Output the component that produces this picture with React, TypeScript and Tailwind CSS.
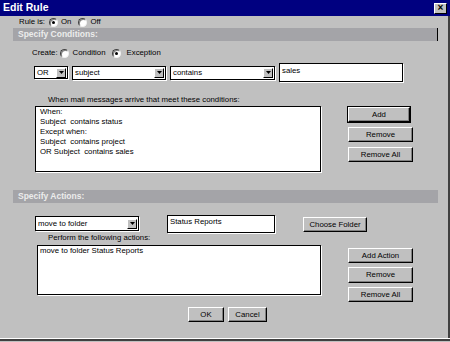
import React from "react";

function Radio({ on }: { on?: boolean }) {
  return (
    <span className="inline-flex h-[9px] w-[9px] shrink-0 items-center justify-center rounded-full border border-t-[#404040] border-l-[#404040] border-r-[#f0f0f0] border-b-[#f0f0f0] bg-white shadow-[inset_1px_1px_0_#808080]">
      {on && <span className="h-[3px] w-[3px] rounded-full bg-black" />}
    </span>
  );
}

function Arrow() {
  return (
    <span className="flex h-[10px] w-[10px] shrink-0 items-center justify-center border border-t-white border-l-white border-r-black border-b-black bg-[#c0c0c0]">
      <svg width="5" height="3" viewBox="0 0 5 3">
        <path d="M0 0h5L2.5 3z" fill="#000" />
      </svg>
    </span>
  );
}

function Combo({ text, className }: { text: string; className: string }) {
  return (
    <div className={`flex items-center justify-between border border-black bg-white pl-[2px] pr-px shadow-[1px_1px_0_#fff] ${className}`}>
      <span className="leading-none">{text}</span>
      <Arrow />
    </div>
  );
}

function Btn({ label, className, isDefault }: { label: string; className: string; isDefault?: boolean }) {
  const inner = (
    <div className="flex h-full w-full items-center justify-center border border-t-white border-l-white border-r-black border-b-black bg-[#c0c0c0] shadow-[inset_-1px_-1px_0_#808080]">
      {label}
    </div>
  );
  if (isDefault) {
    return <div className={`border border-black ${className}`}>{inner}</div>;
  }
  return <div className={className}>{inner}</div>;
}

function Bar({ title, edge }: { title: string; edge?: boolean }) {
  return (
    <div className={`ml-[13px] flex h-[13px] w-[425px] items-center bg-[#a4a4a8] pl-[5px] ${edge ? "border-r border-r-black" : ""}`}>
      <span className="text-[8.5px] font-bold text-[#ececec]">{title}</span>
    </div>
  );
}

export default function App() {
  return (
    <div className="h-[342px] w-[450px] overflow-hidden bg-[#c0c0c0] text-[7.8px] text-black [font-family:'Liberation_Sans',Arial,sans-serif]">
      <div className="flex h-[16px] items-center justify-between bg-[#000080] px-[3px]">
        <span className="text-[10.5px] font-bold text-white">Edit Rule</span>
        <span className="flex h-[11px] w-[13px] items-center justify-center border border-t-white border-l-white border-r-black border-b-black bg-[#c0c0c0] text-[10px] font-bold leading-none">
          ×
        </span>
      </div>

      <div className="flex h-[322px] flex-col border-r-2 border-r-[#404040]">
        <div className="flex h-[12px] items-center pl-[19px]">
          <span>Rule is:</span>
          <span className="ml-[4px] flex"><Radio on /></span>
          <span className="ml-[3px]">On</span>
          <span className="ml-[7px] flex"><Radio /></span>
          <span className="ml-[3px]">Off</span>
        </div>

        <Bar title="Specify Conditions:" edge />

        <div className="mt-[6px] flex h-[12px] items-center pl-[32px]">
          <span>Create:</span>
          <span className="ml-[2px] flex"><Radio /></span>
          <span className="ml-[4px]">Condition</span>
          <span className="ml-[6px] flex"><Radio on /></span>
          <span className="ml-[6px]">Exception</span>
        </div>

        <div className="mt-[4px] flex h-[19px] items-center pl-[34px]">
          <Combo text="OR" className="h-[13px] w-[34px]" />
          <Combo text="subject" className="ml-[4px] h-[14px] w-[94px]" />
          <Combo text="contains" className="ml-[4px] h-[14px] w-[105px]" />
          <div className="ml-[4px] flex h-[19px] w-[124px] items-start border border-black bg-white pl-[2px] pt-[3px] leading-none shadow-[1px_1px_0_#fff]">
            sales
          </div>
        </div>

        <div className="mt-[13px] h-[10px] pl-[48px] leading-[10px]">
          When mail messages arrive that meet these conditions:
        </div>

        <div className="mt-[1px] flex h-[66px] items-start pl-[35px]">
          <div className="h-[66px] w-[286px] border border-black bg-white pl-[4px] leading-[10px] shadow-[1px_1px_0_#fff]">
            <div>When:</div>
            <div>Subject&nbsp; contains status</div>
            <div>Except when:</div>
            <div>Subject&nbsp; contains project</div>
            <div>OR Subject&nbsp; contains sales</div>
          </div>
          <div className="ml-[26px] flex flex-col">
            <Btn label="Add" className="h-[17px] w-[64px]" isDefault />
            <Btn label="Remove" className="ml-px mt-[4px] h-[15px] w-[65px]" />
            <Btn label="Remove All" className="ml-px mt-[5px] h-[15px] w-[65px]" />
          </div>
        </div>

        <div className="mt-[18px]">
          <Bar title="Specify Actions:" />
        </div>

        <div className="mt-[11px] flex h-[19px] items-center pl-[35px]">
          <Combo text="move to folder" className="h-[15px] w-[104px]" />
          <div className="ml-[28px] flex h-[18px] w-[108px] items-start border border-black bg-white pl-[2px] pt-[2px] leading-none shadow-[1px_1px_0_#fff]">
            Status Reports
          </div>
          <Btn label="Choose Folder" className="ml-[28px] mt-[2px] h-[15px] w-[64px]" />
        </div>

        <div className="h-[10px] pl-[48px] leading-[10px]">Perform the following actions:</div>

        <div className="mt-[2px] flex h-[57px] items-start pl-[37px]">
          <div className="h-[50px] w-[284px] border border-black bg-white pl-[2px] leading-[10px] shadow-[1px_1px_0_#fff]">
            move to folder Status Reports
          </div>
          <div className="ml-[27px] mt-[3px] flex flex-col">
            <Btn label="Add Action" className="h-[15px] w-[65px]" />
            <Btn label="Remove" className="mt-[4px] h-[16px] w-[65px]" />
            <Btn label="Remove All" className="mt-[4px] h-[15px] w-[65px]" />
          </div>
        </div>

        <div className="mt-[5px] flex h-[15px] pl-[188px]">
          <Btn label="OK" className="h-[15px] w-[36px]" />
          <Btn label="Cancel" className="ml-[4px] h-[15px] w-[39px]" />
        </div>
      </div>
      <div className="h-px bg-white" />
      <div className="h-[2px] bg-[#404040]" />
    </div>
  );
}
